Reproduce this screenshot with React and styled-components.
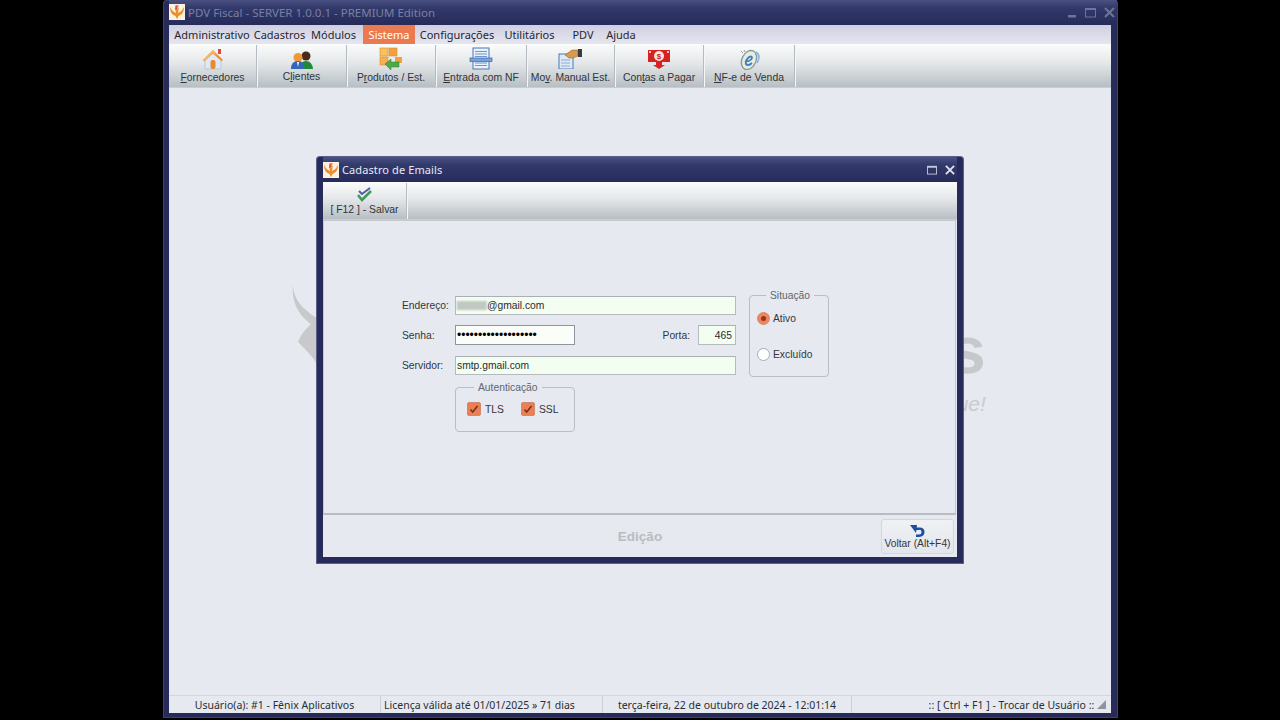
import React from 'react';
import styled, { createGlobalStyle } from 'styled-components';

const Global = createGlobalStyle`
  html, body { margin: 0; padding: 0; background: #000; }
  body { width: 1280px; height: 720px; overflow: hidden; font-family: "Noto Sans", sans-serif; }
  #root { width: 1280px; height: 720px; }
`;

const Screen = styled.div`
  width: 1280px; height: 720px; padding-left: 163px; box-sizing: border-box; background: #000;
`;
const AppWindow = styled.div`
  width: 955px; height: 718px; box-sizing: border-box; display: flex; flex-direction: column;
  background: #262b59; padding: 0 7px 5px 6px; border-radius: 4px 4px 0 0;
  box-shadow: inset 0 0 0 1px #3b4170;
`;
const TitleBar = styled.div`
  display: flex; align-items: center; flex: none; height: ${p => p.$h}px; margin: ${p => p.$m};
  background: linear-gradient(#4b5283 0, #333a6c 30%, #262b5a 100%);
  color: ${p => p.$color}; font-size: ${p => p.$size}px;
`;
const TitleText = styled.span`
  margin-left: 3px; white-space: nowrap; flex: 1; letter-spacing: ${p => p.$ls || 0}px;
`;
const MainControls = styled.div`
  display: flex; align-items: center; gap: 8px; margin-right: 2px;
`;
const MenuBar = styled.div`
  display: flex; flex: none; height: 19px; align-items: stretch; margin-top: 1px;
  background: linear-gradient(#cfcfe2, #e6e6ef);
`;
const MenuItem = styled.div`
  width: ${p => p.$w}px; box-sizing: border-box; flex: none; display: flex; align-items: center; justify-content: center;
  font-size: 11px; white-space: nowrap; color: ${p => p.$on ? '#fff' : '#26272e'};
  background: ${p => p.$on ? '#ec7a50' : 'transparent'};
`;
const Toolbar = styled.div`
  display: flex; flex: none; height: ${p => p.$h}px;
  background: linear-gradient(#fbfcfc 0, #e4e7e9 45%, #b7bfc4 100%);
  border-bottom: 1px solid #c8cdd2;
`;
const ToolButton = styled.div`
  width: ${p => p.$w}px; flex: none; box-sizing: border-box; display: flex; flex-direction: column; align-items: center;
  border-right: 1px solid #b4bbc1; box-shadow: 1px 0 0 #f4f6f7; padding-top: ${p => p.$pt}px;
  margin-top: 1px;
  font: 10.4px "Liberation Sans", sans-serif; color: #30343a; white-space: nowrap;
  svg { flex: none; display: block; }
`;
const ToolLabel = styled.span`
  margin-top: ${p => p.$mt}px; line-height: 13px;
  u { text-underline-offset: 1px; }
`;
const Desktop = styled.div`
  position: relative; flex: 1; background: #e6e9ef; overflow: hidden;
`;
const MarkShape = styled.svg`
  position: absolute; left: 121px; top: 194px;
`;
const MarkBig = styled.span`
  position: absolute; left: 780px; top: 229px; font: bold 66px/1 "Liberation Sans", sans-serif; color: #c6c8cb;
`;
const MarkSlogan = styled.span`
  position: absolute; left: 776px; top: 305px; font: italic 21px/1 "Liberation Sans", sans-serif; color: #c9cbce;
`;
const Dialog = styled.div`
  position: absolute; left: 148px; top: 69px; width: 646px; height: 406px; box-sizing: border-box;
  display: flex; flex-direction: column; background: #262b59; padding: 0 6px 6px 6px;
  border-radius: 3px 3px 0 0; box-shadow: 0 0 0 1px #59608a;
`;
const DialogBody = styled.div`
  flex: 1; display: flex; flex-direction: column; background: #e6e9ef; min-height: 0;
`;
const FormPanel = styled.div`
  height: 295px; flex: none; box-sizing: border-box; border: 1px solid #c5c9ce; border-bottom: 2px solid #b9bdc2;
  margin-right: 1px; padding: 75px 0 0 78px; display: flex; gap: 13px; align-items: flex-start;
`;
const Fields = styled.div`
  width: 334px; display: flex; flex-direction: column; flex: none;
`;
const Row = styled.div`
  display: flex; align-items: center; margin-bottom: ${p => p.$mb}px; height: ${p => p.$h}px;
`;
const Label = styled.label`
  width: 53px; flex: none; font: 10.3px "Liberation Sans", sans-serif; color: #33363c;
`;
const Input = styled.div`
  box-sizing: border-box; height: 100%; width: ${p => p.$w ? p.$w + 'px' : 'auto'}; flex: ${p => p.$w ? 'none' : 1};
  background: #f3fdf0; border: 1px solid #b4bac0; border-top-color: #a9afb6; padding: 0 ${p => p.$right ? 3 : 1}px;
  display: flex; align-items: center; justify-content: ${p => p.$right ? 'flex-end' : 'flex-start'};
  font: 10.3px "Liberation Sans", sans-serif; color: #2a2c30; overflow: hidden; white-space: nowrap;
`;
const PasswordInput = styled(Input)`
  background: #fafdf8; border-color: #8d96a0; font-size: 12px; letter-spacing: 0; color: #000;
`;
const Smudge = styled.span`
  display: inline-block; width: 30px; height: 9px; flex: none; filter: blur(1px);
  background: repeating-linear-gradient(90deg, #a9b0ab 0 2px, #d7ddd5 2px 3px);
  opacity: .85;
`;
const Port = styled.span`
  margin-left: auto; margin-right: 8px; font: 10.3px "Liberation Sans", sans-serif; color: #33363c;
`;
const Group = styled.fieldset`
  margin: 0; min-width: 0; box-sizing: border-box; width: ${p => p.$w}px; height: ${p => p.$h}px; flex: none;
  border: 1px solid #b8bec8; border-radius: 4px; padding: ${p => p.$pad};
  display: flex; gap: ${p => p.$gap}px; flex-direction: ${p => p.$col ? 'column' : 'row'};
  font: 10.3px "Liberation Sans", sans-serif; color: #33363c;
`;
const Legend = styled.legend`
  padding: 0 4px; margin-left: ${p => p.$ml}px; font: 10.3px "Liberation Sans", sans-serif; color: #62666d; line-height: 11px;
`;
const AuthGroup = styled(Group)`
  margin: 7px 0 0 53px;
`;
const SituationGroup = styled(Group)`
  margin-top: -6px;
`;
const Option = styled.div`
  display: flex; align-items: center; gap: ${p => p.$gap}px; height: 14px;
`;
const CheckBox = styled.span`
  width: 14px; height: 14px; box-sizing: border-box; border-radius: 2px; background: #ec7d55; border: 1px solid #cf8a6e;
  display: flex; align-items: center; justify-content: center; flex: none;
`;
const Radio = styled.span`
  width: 13px; height: 13px; box-sizing: border-box; border-radius: 50%; flex: none;
  display: flex; align-items: center; justify-content: center;
  background: ${p => p.$on ? '#ee8560' : '#fff'}; border: 1px solid ${p => p.$on ? '#d98a6c' : '#a6acb5'};
  &::after { content: ""; width: 5px; height: 5px; border-radius: 50%; background: ${p => p.$on ? '#8e3a1b' : 'transparent'}; }
`;
const Footer = styled.div`
  flex: 1; display: flex; align-items: center; position: relative; padding-right: 3px; justify-content: flex-end;
`;
const Mode = styled.div`
  position: absolute; left: 0; right: 0; text-align: center; padding-top: 1px;
  font: bold 13.5px "Liberation Sans", sans-serif; color: #b9bcc1;
`;
const ReturnButton = styled.div`
  width: 73px; height: 35px; box-sizing: border-box; border: 1px solid #d3d7dd; border-radius: 3px;
  background: linear-gradient(#eff1f4, #e3e6ec); display: flex; flex-direction: column; align-items: center;
  padding-top: 4px; font: 10.3px "Liberation Sans", sans-serif; color: #33363c; white-space: nowrap; position: relative;
`;
const StatusBar = styled.div`
  flex: none; height: 17px; display: flex; align-items: center; background: #e6e9ef; border-top: 1px solid #d3d7dc;
  font-size: 10.5px; color: #2c2e34; white-space: nowrap;
`;
const StatusCell = styled.div`
  width: ${p => p.$w}px; flex: none; box-sizing: border-box; height: 100%; display: flex; align-items: center;
  justify-content: ${p => p.$align}; padding: ${p => p.$pad || 0};
  border-right: 1px solid ${p => p.$last ? 'transparent' : '#ccd0d6'};
`;

const Logo = ({ size = 16 }) => (
  <svg width={size} height={size} viewBox="0 0 16 16" style={{ flex: 'none' }}>
    <rect width="16" height="16" fill="#fbf1df" />
    <path d="M1 3 C3 7 5 8 7 9 L6 3 L8 6 L10 3 L9 9 C11 8 13 7 15 3 C15 9 12 11 9.5 12 L8 15 L6.5 12 C4 11 1 9 1 3Z" fill="#ea8f2c" />
    <path d="M6.5 1.5h3v1h-2v1h1.500v1H7.500v1.500h-1z" fill="#c8281c" />
  </svg>
);
const Minimize = () => <svg width="10" height="12" viewBox="0 0 10 12"><rect x="1" y="9" width="8" height="2.500" fill="#6f7598" /></svg>;
const Maximize = ({ c, s = 11 }) => <svg width={s} height={s} viewBox="0 0 11 11"><rect x=".5" y="1.500" width="10" height="8.500" fill="none" stroke={c} /><rect x=".5" y="1" width="10" height="2" fill={c} /></svg>;
const Close = ({ c, s = 11 }) => <svg width={s} height={s} viewBox="0 0 11 11"><path d="M1 1l9 9M10 1l-9 9" stroke={c} strokeWidth="2" /></svg>;

const House = () => (
  <svg width="24" height="24" viewBox="0 0 24 24">
    <path d="M4 12v9q0 1 1 1h14q1 0 1-1v-9l-8-7z" fill="#dfe9f6" stroke="#9db4cf" strokeWidth=".6" />
    <path d="M2 13L12 3l10 10-1.500 1.200L12 6.500 3.500 14.200z" fill="#ee8a2e" />
    <path d="M3 12.500L12 3.500l5 5-5-2.500-8 8z" fill="#f8ba5c" />
    <rect x="9.500" y="13" width="5" height="9" rx="2" fill="#e78a2f" />
    <rect x="17" y="2" width="3" height="5" fill="#d9483a" />
  </svg>
);
const People = () => (
  <svg width="24" height="20" viewBox="0 0 24 20">
    <circle cx="16" cy="6" r="4.500" fill="#4a2a18" />
    <path d="M10 19q0-8 6-8t7 8z" fill="#1f8a3c" />
    <circle cx="8" cy="7.500" r="4.500" fill="#ee9a3a" />
    <path d="M1 19q0-8 7-8t6 8z" fill="#3566b8" />
    <path d="M7 12h2l-1 5z" fill="#fff" />
  </svg>
);
const Boxes = () => (
  <svg width="24" height="23" viewBox="0 0 24 23">
    <rect x="1" y="1" width="8" height="8" fill="#f8c15c" stroke="#dc8b2c" strokeWidth=".6" />
    <rect x="10" y="1" width="8" height="8" fill="#f3a13f" stroke="#dc8b2c" strokeWidth=".6" />
    <rect x="1" y="10" width="8" height="8" fill="#f7b04a" stroke="#dc8b2c" strokeWidth=".6" />
    <rect x="16" y="10" width="7" height="6" fill="#f3a13f" />
    <path d="M6 17l6-5v3h8v5h-8v3z" fill="#4fa84a" stroke="#2f7d34" strokeWidth=".5" />
  </svg>
);
const Scanner = () => (
  <svg width="24" height="23" viewBox="0 0 24 23">
    <rect x="4" y="1" width="16" height="21" fill="#eaf1fa" stroke="#4a77b8" />
    <path d="M6 4.500h12M6 7h12M6 9.500h12M6 16h12M6 18.500h12" stroke="#6f97cc" />
    <rect x="1" y="11" width="22" height="3.500" fill="#7ba2d6" stroke="#3d66a6" strokeWidth=".7" />
  </svg>
);
const HandDoc = () => (
  <svg width="25" height="21" viewBox="0 0 25 21">
    <rect x="1" y="6" width="14" height="15" fill="#dfeaf6" stroke="#4b78b4" />
    <path d="M3 12h9M3 15h9M3 18h9" stroke="#8aa9cf" />
    <path d="M7 7l7-5h6v6l-5 2-4 0z" fill="#d89a4e" stroke="#8b5a20" strokeWidth=".5" />
    <rect x="20" y="1" width="4" height="8" fill="#3a3a40" />
  </svg>
);
const Money = () => (
  <svg width="24" height="20" viewBox="0 0 24 20">
    <path d="M1 1h22v12h-7l-4 0H1z" fill="#d9211f" />
    <circle cx="12" cy="7" r="5" fill="#f8e6e0" />
    <text x="12" y="10" fontSize="8" fontWeight="bold" textAnchor="middle" fill="#c81e1c" fontFamily="Liberation Sans">$</text>
    <path d="M9 13h6v3h3l-6 4-6-4h3z" fill="#d9211f" />
    <circle cx="3" cy="3" r="1" fill="#fff" /><circle cx="21" cy="3" r="1" fill="#fff" />
  </svg>
);
const NFe = () => (
  <svg width="24" height="21" viewBox="0 0 24 21">
    <ellipse cx="12" cy="11" rx="7" ry="10" transform="rotate(25 12 11)" fill="#e6edd8" stroke="#8d96a6" strokeWidth="1.400" />
    <path d="M8 12c2 1 6 0 7-3 0-2-2-2-4 0-3 3-3 7 0 7 2 0 3-1 4-2" fill="none" stroke="#3f7fc4" strokeWidth="1.800" />
    <path d="M19 3c3 2 4 6 1 11" fill="none" stroke="#8cb5dc" strokeWidth="1.600" />
    <path d="M4 2l2 2M7 1l1 2" stroke="#9aa1ac" />
  </svg>
);
const DoubleCheck = () => (
  <svg width="16" height="15" viewBox="0 0 16 15">
    <path d="M2 4l3 3 8-6" fill="none" stroke="#4d5f9e" strokeWidth="2" />
    <path d="M1 8l4 5 9-9" fill="none" stroke="#44985a" strokeWidth="2.600" />
  </svg>
);
const BackArrow = () => (
  <svg width="17" height="14" viewBox="0 0 17 14">
    <path d="M7 3.500h3.500q5 0 5 4.500t-5.500 5H7v-2.600h3q2.500 0 2.500-2.500T10 5.900H7z" fill="#1c4f9e" />
    <path d="M1 1l7 0-1 8z" fill="#1c4f9e" />
  </svg>
);
const Tick = () => <svg width="10" height="10" viewBox="0 0 10 10"><path d="M1.500 5.500l2.200 2.500L8.500 2" fill="none" stroke="#6e3317" strokeWidth="1.500" /></svg>;
const Grip = () => <svg width="9" height="9" viewBox="0 0 9 9"><path d="M9 0v9H0z" fill="#8f959d" /></svg>;

const menus = [
  ['Administrativo', 86], ['Cadastros', 49], ['Módulos', 59], ['Sistema', 52, true],
  ['Configurações', 84], ['Utilitários', 61], ['PDV', 46], ['Ajuda', 30],
];
const tools = [
  [<><u>F</u>ornecedores</>, 88, <House />, 2, 0],
  [<>C<u>l</u>ientes</>, 90, <People />, 5, 0],
  [<>P<u>r</u>odutos / Est.</>, 89, <Boxes />, 2, 1],
  [<><u>E</u>ntrada com NF</>, 91, <Scanner />, 2, 1],
  [<>Mo<u>v</u>. Manual Est.</>, 88, <HandDoc />, 3, 2],
  [<>Con<u>t</u>as a Pagar</>, 89, <Money />, 4, 2],
  [<><u>N</u>F-e de Venda</>, 91, <NFe />, 4, 1],
];

export default function App() {
  return (
    <Screen>
      <Global />
      <AppWindow>
        <TitleBar $h={24} $m="0 -6px 0 0" $color="#7a80a2" $size={11.500}>
          <Logo />
          <TitleText>PDV Fiscal - SERVER 1.0.0.1 - PREMIUM Edition</TitleText>
          <MainControls>
            <Minimize />
            <Maximize c="#6f7598" />
            <Close c="#6f7598" />
          </MainControls>
        </TitleBar>
        <MenuBar>
          {menus.map(([t, w, on]) => <MenuItem key={t} $w={w} $on={on}>{t}</MenuItem>)}
        </MenuBar>
        <Toolbar $h={43}>
          {tools.map(([label, w, icon, pt, mt], i) => (
            <ToolButton key={i} $w={w} $pt={pt}>
              {icon}
              <ToolLabel $mt={mt}>{label}</ToolLabel>
            </ToolButton>
          ))}
        </Toolbar>
        <Desktop>
          <MarkShape width="30" height="82" viewBox="0 0 30 82">
            <path d="M3 2C3 18 14 28 27 36L27 82 C22 74 16 68 8 60 C11 52 17 46 21 42 C10 34 1 22 3 2Z" fill="#c8c9cb" />
          </MarkShape>
          <MarkBig>s</MarkBig>
          <MarkSlogan>que!</MarkSlogan>
          <Dialog>
            <TitleBar $h={25} $m="0" $color="#e8eaf3" $size={11}>
              <Logo />
              <TitleText $ls={.1}>Cadastro de Emails</TitleText>
              <MainControls>
                <Maximize c="#c5c9dc" s={10} />
                <Close c="#e4e6f0" s={10} />
              </MainControls>
            </TitleBar>
            <DialogBody>
              <Toolbar $h={37}>
                <ToolButton $w={84} $pt={4}>
                  <DoubleCheck />
                  <ToolLabel $mt={1}>[ F12 ] - Salvar</ToolLabel>
                </ToolButton>
              </Toolbar>
              <FormPanel>
                <Fields>
                  <Row $h={19} $mb={10}>
                    <Label>Endereço:</Label>
                    <Input><Smudge />@gmail.com</Input>
                  </Row>
                  <Row $h={20} $mb={11}>
                    <Label>Senha:</Label>
                    <PasswordInput $w={120}>•••••••••••••••••••</PasswordInput>
                    <Port>Porta:</Port>
                    <Input $w={38} $right>465</Input>
                  </Row>
                  <Row $h={19} $mb={0}>
                    <Label>Servidor:</Label>
                    <Input>smtp.gmail.com</Input>
                  </Row>
                  <AuthGroup $w={120} $h={50} $pad="9px 0 0 11px" $gap={17}>
                    <Legend $ml={7}>Autenticação</Legend>
                    <Option $gap={4}><CheckBox><Tick /></CheckBox>TLS</Option>
                    <Option $gap={4}><CheckBox><Tick /></CheckBox>SSL</Option>
                  </AuthGroup>
                </Fields>
                <SituationGroup $w={80} $h={87} $pad="10px 0 0 7px" $gap={22} $col>
                  <Legend $ml={9}>Situação</Legend>
                  <Option $gap={3}><Radio $on />Ativo</Option>
                  <Option $gap={3}><Radio />Excluído</Option>
                </SituationGroup>
              </FormPanel>
              <Footer>
                <Mode>Edição</Mode>
                <ReturnButton>
                  <BackArrow />
                  Voltar (Alt+F4)
                </ReturnButton>
              </Footer>
            </DialogBody>
          </Dialog>
        </Desktop>
        <StatusBar>
          <StatusCell $w={212} $align="center">Usuário(a): #1 - Fênix Aplicativos</StatusCell>
          <StatusCell $w={222} $align="flex-start" $pad="0 0 0 3px">Licença válida até 01/01/2025 » 71 dias</StatusCell>
          <StatusCell $w={249} $align="center">terça-feira, 22 de outubro de 2024 - 12:01:14</StatusCell>
          <StatusCell $w={258} $align="flex-end" $pad="0 3px 0 0" $last>:: [ Ctrl + F1 ] - Trocar de Usuário ::&nbsp;<Grip /></StatusCell>
        </StatusBar>
      </AppWindow>
    </Screen>
  );
}
